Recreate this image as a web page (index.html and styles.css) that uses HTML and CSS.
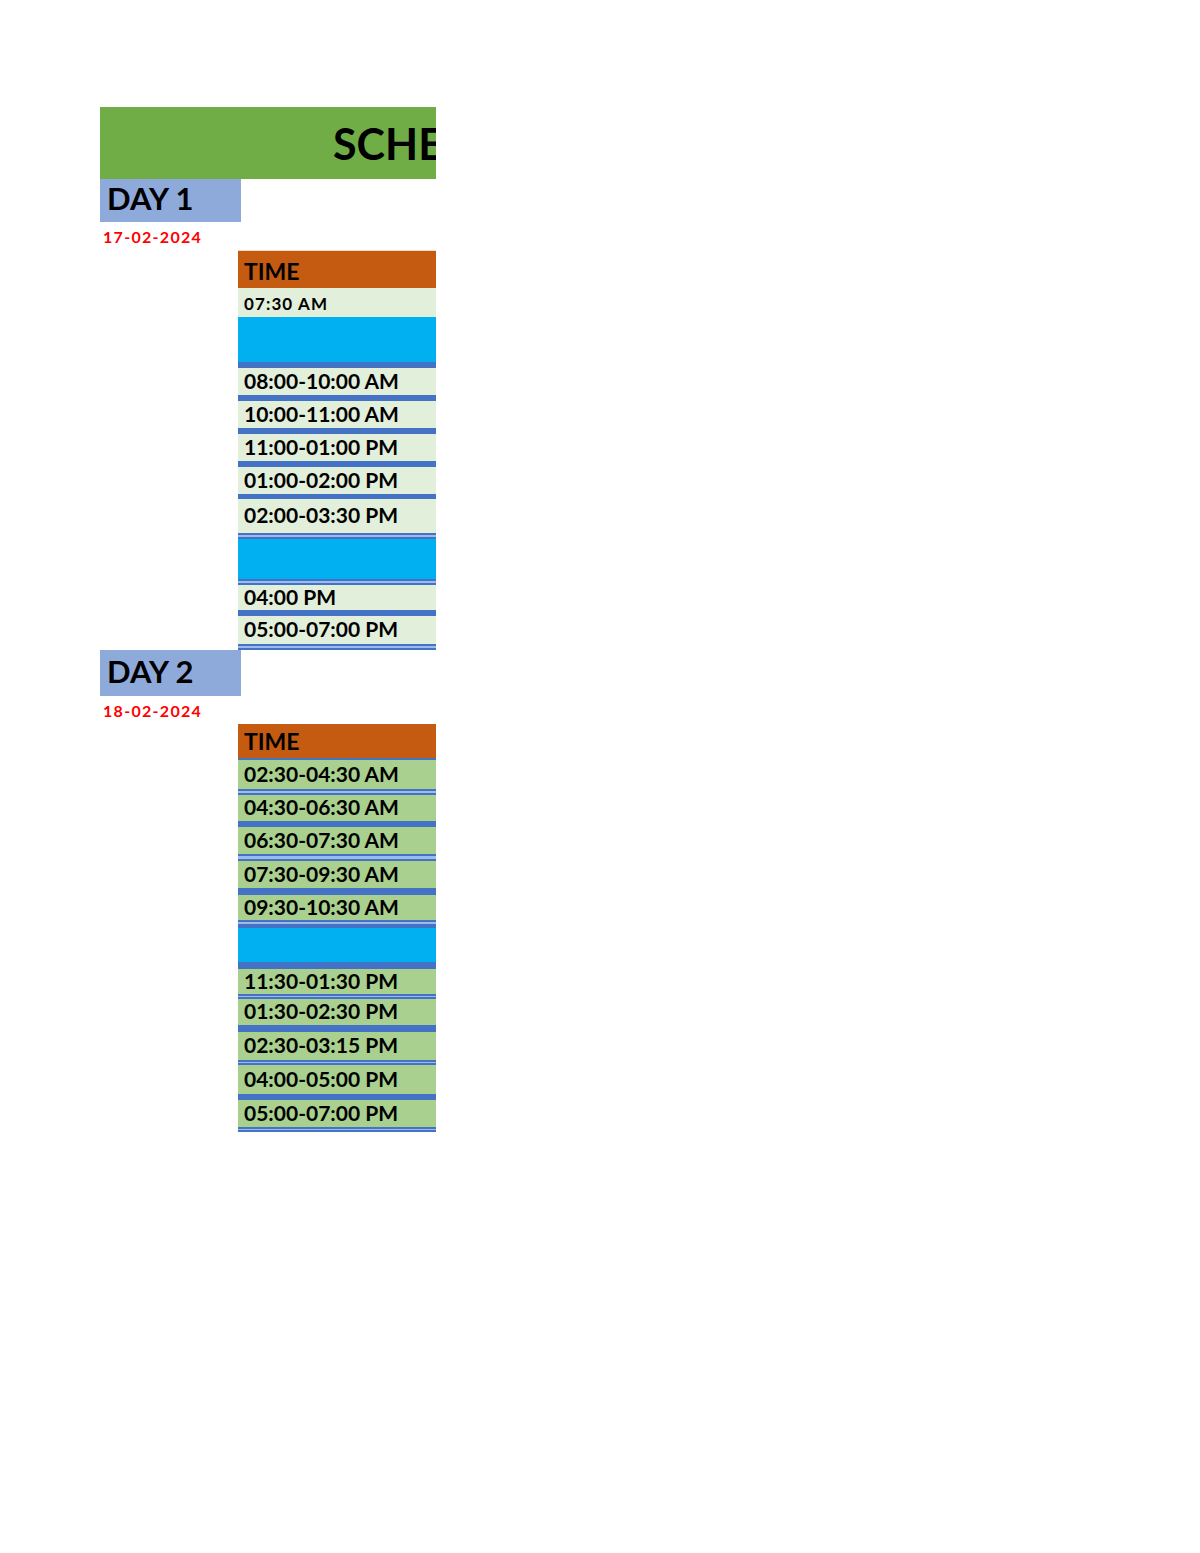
FILE: index.html
```html
<!DOCTYPE html>
<html>
<head>
<meta charset="utf-8">
<title>Schedule</title>
<link rel="stylesheet" href="styles.css">
</head>
<body>
<div class="sheet">
  <div class="title"><span class="title-text">SCHEDULE</span></div>

  <div class="day day1">DAY 1</div>
  <div class="date">17-02-2024</div>
  <div class="col">
    <div class="head">TIME</div>
    <div class="row h29 small">07:30 AM</div>
    <div class="break h45"></div>
    <div class="sep"></div>
    <div class="row h27">08:00-10:00 AM</div>
    <div class="sep"></div>
    <div class="row h27">10:00-11:00 AM</div>
    <div class="sep"></div>
    <div class="row h27">11:00-01:00 PM</div>
    <div class="sep"></div>
    <div class="row h27">01:00-02:00 PM</div>
    <div class="sep s5"></div>
    <div class="row h34">02:00-03:30 PM</div>
    <div class="dbl"></div>
    <div class="break h40"></div>
    <div class="dbl"></div>
    <div class="row h25">04:00 PM</div>
    <div class="sep"></div>
    <div class="row h28">05:00-07:00 PM</div>
    <div class="dbl"></div>
  </div>

  <div class="day day2">DAY 2</div>
  <div class="date">18-02-2024</div>
  <div class="col green">
    <div class="head head2">TIME</div>
    <div class="row h29">02:30-04:30 AM</div>
    <div class="dbl"></div>
    <div class="row h26">04:30-06:30 AM</div>
    <div class="sep"></div>
    <div class="row h27">06:30-07:30 AM</div>
    <div class="dbl s7"></div>
    <div class="row h27">07:30-09:30 AM</div>
    <div class="sep s7"></div>
    <div class="row h25">09:30-10:30 AM</div>
    <div class="dbl s8"></div>
    <div class="break h34"></div>
    <div class="sep s7"></div>
    <div class="row h25">11:30-01:30 PM</div>
    <div class="dbl s5"></div>
    <div class="row h26">01:30-02:30 PM</div>
    <div class="sep s7"></div>
    <div class="row h28">02:30-03:15 PM</div>
    <div class="dbl s5"></div>
    <div class="row h29">04:00-05:00 PM</div>
    <div class="sep"></div>
    <div class="row h27">05:00-07:00 PM</div>
    <div class="dbl s5"></div>
  </div>
</div>
</body>
</html>
```

FILE: styles.css
```css
html, body {
  margin: 0;
  padding: 0;
  background: #ffffff;
}

body {
  font-family: Lato, "Open Sans", "Liberation Sans", sans-serif;
  color: #000000;
}

.sheet {
  margin: 107px 0 0 100px;
  width: 336px;
}

.title {
  height: 72px;
  background: #70ad47;
  overflow: hidden;
  white-space: nowrap;
  display: flex;
  align-items: center;
  padding-left: 233px;
  box-sizing: border-box;
}

.title-text {
  font-size: 43px;
  font-weight: 700;
  line-height: 1;
}

.day {
  width: 141px;
  background: #8eaadb;
  font-size: 31px;
  font-weight: 700;
  padding-left: 7px;
  box-sizing: border-box;
  display: flex;
  align-items: center;
  line-height: 1;
  padding-bottom: 4px;
}

.day1 { height: 43px; }
.day2 { height: 46px; }

.date {
  height: 28px;
  color: #ff0000;
  font-size: 16px;
  font-weight: 700;
  letter-spacing: 1.3px;
  padding-left: 3px;
  display: flex;
  align-items: center;
}

.col {
  margin-left: 138px;
  width: 198px;
  background: #e2efda;
}

.col.green {
  background: #a9d08e;
}

.head {
  height: 38px;
  background: #c55a11;
  font-size: 23px;
  font-weight: 700;
  padding-left: 6px;
  display: flex;
  align-items: flex-end;
  padding-bottom: 5px;
  box-sizing: border-box;
  line-height: 1;
  border-top: 1px solid #f4d9c6;
}

.head2 {
  height: 36px;
  border-top: none;
  border-bottom: 2px solid #4472c4;
  align-items: center;
  padding-top: 1px;
  padding-bottom: 0;
}

.row {
  font-size: 21px;
  font-weight: 700;
  padding-left: 6px;
  display: flex;
  align-items: center;
  line-height: 1;
  white-space: nowrap;
  box-sizing: border-box;
  padding-bottom: 3px;
}

.row.small {
  font-size: 17px;
  letter-spacing: 1.1px;
  padding-bottom: 0;
  padding-top: 1px;
}

.break {
  background: #00b0f0;
}

.h25 { height: 25px; }
.h26 { height: 26px; }
.h27 { height: 27px; }
.h28 { height: 28px; }
.h29 { height: 29px; }
.h34 { height: 34px; }
.h40 { height: 40px; }
.h45 { height: 45px; }

.sep {
  height: 6px;
  background: #4472c4;
}

.sep.s5 { height: 5px; }
.sep.s7 { height: 7px; }

.dbl {
  height: 2px;
  border-top: 2px solid #4472c4;
  border-bottom: 2px solid #4472c4;
  background: #9dbbe8;
}

.dbl.s5 {
  height: 1px;
}

.dbl.s7 {
  height: 3px;
}

.dbl.s8 {
  height: 2px;
  border-bottom-width: 4px;
}
```
